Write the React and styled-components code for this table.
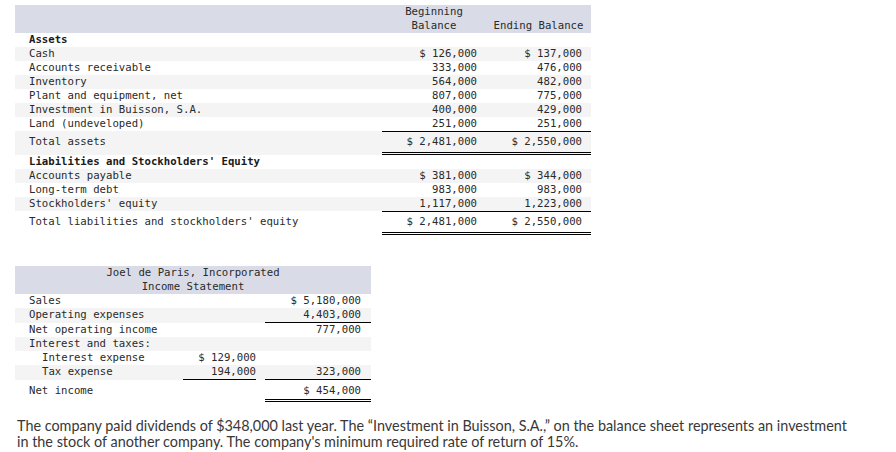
import React from "react";
import styled, { createGlobalStyle, css } from "styled-components";

const GlobalStyle = createGlobalStyle`
  html, body { margin: 0; padding: 0; background: #fff; }
`;

const Page = styled.div`
  padding: 5px 0 0 15px;
  width: 881px;
  box-sizing: border-box;
`;

const Table = styled.div`
  width: ${(p) => p.$width}px;
  font-family: "DejaVu Sans Mono", "Liberation Mono", monospace;
  font-size: 10.67px;
  line-height: 14px;
  color: #2a2a2a;
  margin-top: ${(p) => p.$mt || 0}px;
`;

const HeadRow = styled.div`
  display: grid;
  grid-template-columns: ${(p) => p.$cols};
  align-items: end;
  height: 28px;
  background: #d9dce6;
`;

const HeadCell = styled.div`
  text-align: center;
  grid-column: ${(p) => p.$span || "auto"};
`;

const Row = styled.div`
  display: grid;
  grid-template-columns: ${(p) => p.$cols};
  background: ${(p) => (p.$shade ? "#f4f4f4" : "#fff")};
`;

const Label = styled.div`
  padding-left: ${(p) => 14 + (p.$indent || 0)}px;
  padding-top: ${(p) => p.$pt || 0}px;
  padding-bottom: ${(p) => p.$pb || 0}px;
  font-weight: ${(p) => (p.$bold ? 700 : 400)};
  white-space: pre;
  color: ${(p) => (p.$bold ? "#1a1a1a" : "inherit")};
`;

const Num = styled.div`
  text-align: right;
  white-space: pre;
  padding-right: ${(p) => (p.$pr ?? 9)}px;
  padding-top: ${(p) => p.$pt || 0}px;
  padding-bottom: ${(p) => p.$pb || 0}px;
  ${(p) => p.$over && css`border-top: 1px solid #000;`}
  ${(p) => p.$under && css`border-bottom: 1px solid #000;`}
  ${(p) => p.$double && css`border-bottom: 3px double #000;`}
`;

const Note = styled.p`
  margin: 16px 0 0 2px;
  font-family: Lato, "Open Sans", sans-serif;
  font-size: 14.4px;
  line-height: 16px;
  color: #383838;
  width: 842px;
`;

const BS_COLS = "367px 104px 105px";
const IS_COLS = "168px 73px 9px 106px";

const assets = [
  ["Cash", "$ 126,000", "$ 137,000"],
  ["Accounts receivable", "333,000", "476,000"],
  ["Inventory", "564,000", "482,000"],
  ["Plant and equipment, net", "807,000", "775,000"],
  ["Investment in Buisson, S.A.", "400,000", "429,000"],
  ["Land (undeveloped)", "251,000", "251,000"],
];

const liabilities = [
  ["Accounts payable", "$ 381,000", "$ 344,000"],
  ["Long-term debt", "983,000", "983,000"],
  ["Stockholders' equity", "1,117,000", "1,223,000"],
];

function TotalRow({ label, a, b, shade }) {
  return (
    <Row $cols={BS_COLS} $shade={shade}>
      <Label $pt={4} $pb={6}>{label}</Label>
      <Num $over $double $pt={3} $pb={3}>{a}</Num>
      <Num $over $double $pt={3} $pb={3}>{b}</Num>
    </Row>
  );
}

export default function App() {
  return (
    <>
      <GlobalStyle />
      <Page>
        <Table $width={576}>
          <HeadRow $cols={BS_COLS}>
            <HeadCell />
            <HeadCell>
              Beginning
              <br />
              Balance
            </HeadCell>
            <HeadCell>Ending Balance</HeadCell>
          </HeadRow>
          <Row $cols={BS_COLS}>
            <Label $bold>Assets</Label>
            <Num />
            <Num />
          </Row>
          {assets.map(([l, a, b], i) => (
            <Row key={l} $cols={BS_COLS} $shade={i % 2 === 0}>
              <Label>{l}</Label>
              <Num>{a}</Num>
              <Num>{b}</Num>
            </Row>
          ))}
          <TotalRow label="Total assets" a="$ 2,481,000" b="$ 2,550,000" shade />
          <Row $cols={BS_COLS}>
            <Label $bold>Liabilities and Stockholders' Equity</Label>
            <Num />
            <Num />
          </Row>
          {liabilities.map(([l, a, b], i) => (
            <Row key={l} $cols={BS_COLS} $shade={i % 2 === 0}>
              <Label>{l}</Label>
              <Num>{a}</Num>
              <Num>{b}</Num>
            </Row>
          ))}
          <TotalRow
            label="Total liabilities and stockholders' equity"
            a="$ 2,481,000"
            b="$ 2,550,000"
          />
        </Table>

        <Table $width={356} $mt={31}>
          <HeadRow $cols={IS_COLS}>
            <HeadCell $span="1 / -1">
              Joel de Paris, Incorporated
              <br />
              Income Statement
            </HeadCell>
          </HeadRow>
          <Row $cols={IS_COLS}>
            <Label>Sales</Label>
            <Num />
            <Num />
            <Num $pr={10}>$ 5,180,000</Num>
          </Row>
          <Row $cols={IS_COLS} $shade>
            <Label>Operating expenses</Label>
            <Num />
            <Num />
            <Num $pr={10} $under>4,403,000</Num>
          </Row>
          <Row $cols={IS_COLS}>
            <Label>Net operating income</Label>
            <Num />
            <Num />
            <Num $pr={10}>777,000</Num>
          </Row>
          <Row $cols={IS_COLS} $shade>
            <Label>Interest and taxes:</Label>
            <Num />
            <Num />
            <Num />
          </Row>
          <Row $cols={IS_COLS}>
            <Label $indent={13}>Interest expense</Label>
            <Num $pr={0}>$ 129,000</Num>
            <Num />
            <Num />
          </Row>
          <Row $cols={IS_COLS} $shade>
            <Label $indent={13}>Tax expense</Label>
            <Num $pr={0} $under>194,000</Num>
            <Num />
            <Num $pr={10} $under>323,000</Num>
          </Row>
          <Row $cols={IS_COLS}>
            <Label $pt={4} $pb={4}>Net income</Label>
            <Num />
            <Num />
            <Num $pr={10} $pt={4} $pb={1} $double>$ 454,000</Num>
          </Row>
        </Table>

        <Note>
          The company paid dividends of $348,000 last year. The “Investment in
          Buisson, S.A.,” on the balance sheet represents an investment in the
          stock of another company. The company's minimum required rate of
          return of 15%.
        </Note>
      </Page>
    </>
  );
}
